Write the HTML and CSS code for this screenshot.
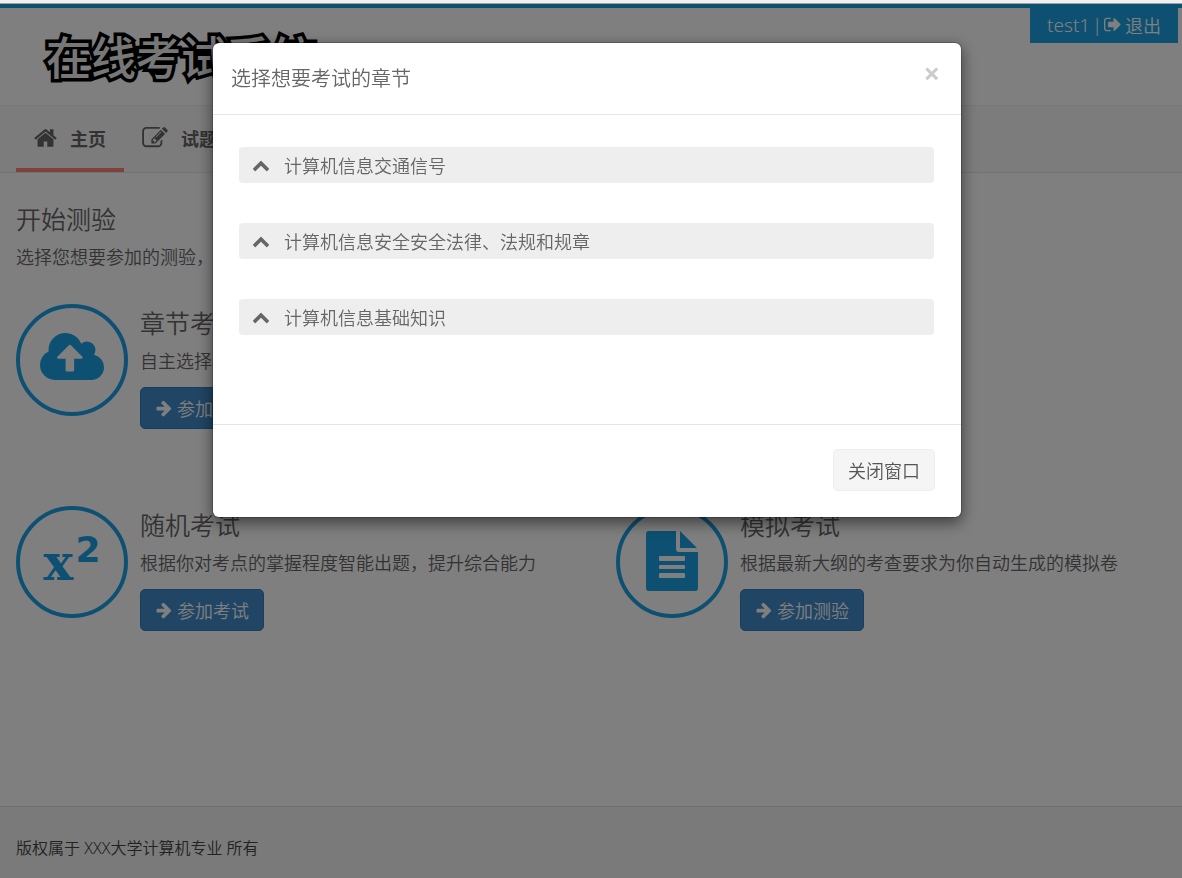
FILE: index.html
```
<!DOCTYPE html>
<html lang="zh-CN">
<head>
  <meta charset="UTF-8" />
  <meta name="viewport" content="width=device-width, initial-scale=1" />
  <title>在线考试系统</title>
  <link rel="stylesheet" href="styles.css">
</head>
<body>
  <div class="window-edge"></div>

  <!-- shared icons -->
  <svg class="sprite" aria-hidden="true">
    <symbol id="arrow-right" viewBox="0 0 1664 1792">
      <path d="M1600 960q0 54-37 91l-651 651q-39 37-91 37-51 0-90-37l-75-75q-38-38-38-91t38-91l293-293h-704q-52 0-84.5-37.5t-32.5-90.5v-128q0-53 32.5-90.5t84.5-37.5h704l-293-294q-38-36-38-90t38-90l75-75q38-38 90-38 53 0 91 38l651 651q37 35 37 90z"/>
    </symbol>
    <symbol id="chevron-up" viewBox="0 0 1792 1792">
      <path d="M1683 1331l-166 165q-19 19-45 19t-45-19l-531-531-531 531q-19 19-45 19t-45-19l-166-165q-19-19-19-45.5t19-45.5l742-741q19-19 45-19t45 19l742 741q19 19 19 45.5t-19 45.5z"/>
    </symbol>
  </svg>

  <header class="header">
    <h1 class="logo">在线考试系统</h1>
    <div class="user-bar">
      <a href="#" class="user-name">test1</a>
      <span>|</span>
      <a href="#" class="logout">
        <svg class="icon-logout" viewBox="64 192 1600 1408"><path d="M704 1440q0 4 1 20t.5 26.5-3 23.5-10 19.5-20.5 6.5h-320q-119 0-203.5-84.5t-84.5-203.5v-704q0-119 84.5-203.5t203.5-84.5h320q13 0 22.5 9.5t9.5 22.5q0 4 1 20t.5 26.5-3 23.5-10 19.5-20.5 6.5h-320q-66 0-113 47t-47 113v704q0 66 47 113t113 47h312l11.5 1 11.5 3 8 5.5 7 9 2 13.5zm928-544q0 26-19 45l-544 544q-19 19-45 19t-45-19-19-45v-288h-448q-26 0-45-19t-19-45v-384q0-26 19-45t45-19h448v-288q0-26 19-45t45-19 45 19l544 544q19 19 19 45z"/></svg>
        退出
      </a>
    </div>
  </header>

  <nav class="nav">
    <a href="#" class="nav-item active">
      <svg class="icon-nav" viewBox="64 128 1664 1536"><path d="M1472 992v480q0 26-19 45t-45 19h-384v-384h-256v384h-384q-26 0-45-19t-19-45v-480q0-1 .5-3t.5-3l575-474 575 474q1 2 1 6zm223-69l-62 74q-8 9-21 11h-3q-13 0-21-7l-692-577-692 577q-12 8-24 7-13-2-21-11l-62-74q-8-10-7-23.5t11-21.5l719-599q32-26 76-26t76 26l244 204v-195q0-14 9-23t23-9h192q14 0 23 9t9 23v408l219 182q10 8 11 21.5t-7 23.5z"/></svg>
      主页
    </a>
    <a href="#" class="nav-item">
      <svg class="icon-nav icon-edit" viewBox="0 128 1792 1536"><path d="M888 1184l116-116-152-152-116 116v56h96v96h56zm440-720q-16-16-33 1l-350 350q-17 17-1 33t33-1l350-350q17-17 1-33zm80 594v190q0 119-84.5 203.5t-203.5 84.5h-832q-119 0-203.5-84.5t-84.5-203.5v-832q0-119 84.5-203.5t203.5-84.5h832q63 0 117 25 15 7 18 23 3 17-9 29l-49 49q-14 14-32 8-23-6-45-6h-832q-66 0-113 47t-47 113v832q0 66 47 113t113 47h832q66 0 113-47t47-113v-126q0-13 9-22l64-64q15-15 35-7t20 29zm-96-738l288 288-672 672h-288v-288zm444 132l-92 92-288-288 92-92q28-28 68-28t68 28l152 152q28 28 28 68t-28 68z"/></svg>
      试题
    </a>
  </nav>

  <main class="content">
    <h2 class="title">开始测验</h2>
    <p class="desc">选择您想要参加的测验，考</p>

    <div class="exam-list">
      <section class="exam exam-first">
        <div class="circle">
          <svg class="icon-cloud" viewBox="0 128 1920 1408"><path d="M1280 864q0-14-9-23l-352-352q-9-9-23-9t-23 9l-351 351q-10 12-10 24 0 14 9 23t23 9h224v352q0 13 9.5 22.5t22.5 9.5h192q13 0 22.5-9.5t9.5-22.5v-352h224q13 0 22.5-9.5t9.5-22.5zm640 288q0 159-112.5 271.5t-271.5 112.5h-1088q-185 0-316.5-131.5t-131.5-316.5q0-130 70-240t188-165q-2-30-2-43 0-212 150-362t362-150q156 0 285.5 87t188.5 231q71-62 166-62 106 0 181 75t75 181q0 76-41 138 130 31 213.5 135.5t83.5 238.5z"/></svg>
        </div>
        <div class="exam-body">
          <h3>章节考试</h3>
          <p>自主选择具</p>
          <button class="btn-primary"><svg class="icon-arrow"><use href="#arrow-right"/></svg>参加考试</button>
        </div>
      </section>

      <section class="exam">
        <div class="circle">
          <span class="power">x<sup>2</sup></span>
        </div>
        <div class="exam-body">
          <h3>随机考试</h3>
          <p>根据你对考点的掌握程度智能出题，提升综合能力</p>
          <button class="btn-primary"><svg class="icon-arrow"><use href="#arrow-right"/></svg>参加考试</button>
        </div>
      </section>

      <section class="exam">
        <div class="circle">
          <svg class="icon-file" viewBox="0 0 52 60">
            <path fill-rule="evenodd" d="M3 0H30V18Q30 21 33 21H52V57Q52 60 49 60H3Q0 60 0 57V3Q0 0 3 0ZM14 25Q13 25 13 26V29Q13 30 14 30H38Q39 30 39 29V26Q39 25 38 25ZM14 34Q13 34 13 35V37Q13 38 14 38H38Q39 38 39 37V35Q39 34 38 34ZM14 42Q13 42 13 43V46Q13 47 14 47H38Q39 47 39 46V43Q39 42 38 42Z"/>
            <path d="M34 0L51 17H34Z"/>
          </svg>
        </div>
        <div class="exam-body">
          <h3>模拟考试</h3>
          <p>根据最新大纲的考查要求为你自动生成的模拟卷</p>
          <button class="btn-primary"><svg class="icon-arrow"><use href="#arrow-right"/></svg>参加测验</button>
        </div>
      </section>
    </div>
  </main>

  <footer class="footer">版权属于 XXX大学计算机专业 所有</footer>

  <!-- chapter picker -->
  <div class="backdrop" id="chapterModal">
    <div class="modal" role="dialog" aria-modal="true" aria-labelledby="modalTitle">
      <div class="modal-header">
        <h4 id="modalTitle">选择想要考试的章节</h4>
        <button class="close" aria-label="关闭" onclick="closeModal()">×</button>
      </div>
      <div class="modal-body">
        <button class="chapter"><svg class="icon-chevron"><use href="#chevron-up"/></svg>计算机信息交通信号</button>
        <button class="chapter"><svg class="icon-chevron"><use href="#chevron-up"/></svg>计算机信息安全安全法律、法规和规章</button>
        <button class="chapter"><svg class="icon-chevron"><use href="#chevron-up"/></svg>计算机信息基础知识</button>
      </div>
      <div class="modal-footer">
        <button class="btn-default" onclick="closeModal()">关闭窗口</button>
      </div>
    </div>
  </div>

  <script>
    function closeModal() {
      document.getElementById("chapterModal").style.display = "none";
    }
  </script>
</body>
</html>
```
FILE: styles.css
```
* {
  box-sizing: border-box;
}
body {
  margin: 0;
  min-height: 100vh;
  display: flex;
  flex-direction: column;
  font-family: "Noto Sans", "Noto Sans CJK SC", sans-serif;
  font-size: 18px;
  font-weight: 350;
  color: #666;
  background: #fff;
}
h1, h2, h3, h4, p {
  margin: 0;
  font-weight: 350;
}
a {
  color: inherit;
  text-decoration: none;
}
button {
  font: inherit;
  cursor: pointer;
}
svg {
  fill: currentColor;
  flex: none;
}
.sprite {
  display: none;
}
.window-edge {
  height: 4px;
  background: #f0f0f0;
  border-bottom: 1px solid #a0a0a0;
  position: relative;
  z-index: 20;
}

/* header */
.header {
  display: flex;
  justify-content: space-between;
  align-items: flex-start;
  height: 102px;
  padding: 0 4px 0 46px;
  border-top: 4px solid #1ba1e2;
  border-bottom: 1px solid #eee;
}
.logo {
  font-size: 45px;
  font-weight: 500;
  line-height: 100px;
  color: #eee;
  -webkit-text-stroke: 7px #000;
  stroke-linejoin: round;
  paint-order: stroke fill;
}
.user-bar {
  display: flex;
  align-items: center;
  gap: 2px;
  height: 35px;
  padding: 0 17px 2px;
  color: #fff;
  background: #1ba1e2;
}
.user-name {
  font-size: 19px;
}
.logout {
  display: flex;
  align-items: center;
  gap: 4px;
}
.icon-logout {
  width: 17px;
  height: 15px;
}

/* nav */
.nav {
  display: flex;
  height: 67px;
  padding: 0 16px;
  background: #f9f9f9;
  border-bottom: 1px solid #e7e7e7;
}
.nav-item {
  display: flex;
  align-items: center;
  gap: 13px;
  padding: 2px 18px 0;
  font-weight: bold;
  border-bottom: 4px solid transparent;
}
.nav-item.active {
  border-bottom-color: #ff8378;
}
.icon-nav {
  width: 23px;
  height: 22px;
}
.icon-edit {
  width: 26px;
}

/* content */
.content {
  flex: 1;
  padding: 27px 16px 0;
}
.title {
  font-size: 25px;
  line-height: 38px;
}
.desc {
  line-height: 38px;
}
.exam-list {
  display: grid;
  grid-template-columns: 1fr 1fr;
  gap: 77px 50px;
  margin-top: 28px;
}
.exam {
  display: flex;
  gap: 12px;
}
.exam-first {
  grid-column: 1 / -1;
}
.circle {
  display: flex;
  align-items: center;
  justify-content: center;
  flex: none;
  width: 112px;
  height: 112px;
  border: 4px solid #1ba1e2;
  border-radius: 50%;
  color: #1ba1e2;
}
.icon-cloud {
  width: 64px;
  height: 47px;
  margin-bottom: 8px;
}
.icon-file {
  width: 52px;
  height: 60px;
  margin-bottom: 2px;
}
.power {
  font-family: "DejaVu Serif", serif;
  font-size: 50px;
  font-weight: bold;
  line-height: 60px;
}
.power sup {
  margin-left: 2px;
  font-family: "DejaVu Sans", sans-serif;
  font-size: 36px;
  line-height: 1;
}
.exam h3 {
  font-size: 25px;
  line-height: 38px;
}
.exam p {
  line-height: 38px;
}
.btn-primary {
  display: flex;
  align-items: center;
  gap: 5px;
  height: 42px;
  margin-top: 7px;
  padding: 0 14px;
  color: #fff;
  background: #428bca;
  border: 1px solid #357ebd;
  border-radius: 5px;
}
.icon-arrow {
  width: 17px;
  height: 18px;
}

/* footer */
.footer {
  height: 72px;
  padding: 0 16px;
  font-size: 16px;
  line-height: 82px;
  color: #444;
  background: #f5f5f5;
  border-top: 1px solid #ddd;
}

/* modal */
.backdrop {
  position: fixed;
  inset: 0;
  z-index: 10;
  padding: 42px 8px 0 0;
  background: rgba(0, 0, 0, 0.5);
}
.modal {
  max-width: 750px;
  margin: 0 auto;
  background: #fff;
  background-clip: padding-box;
  border: 1px solid rgba(0, 0, 0, 0.2);
  border-radius: 7px;
  box-shadow: 0 5px 15px rgba(0, 0, 0, 0.5);
}
.modal-header {
  display: flex;
  justify-content: space-between;
  align-items: flex-start;
  padding: 17px 21px 16px 18px;
  border-bottom: 1px solid #e5e5e5;
}
.modal-header h4 {
  font-size: 20px;
  line-height: 38px;
}
.close {
  padding: 0;
  font-size: 29px;
  font-weight: bold;
  line-height: 26px;
  color: #ccc;
  background: none;
  border: 0;
}
.modal-body {
  display: flex;
  flex-direction: column;
  gap: 40px;
  padding: 32px 27px 89px 26px;
}
.chapter {
  display: flex;
  align-items: center;
  gap: 14px;
  height: 36px;
  padding: 0 13px;
  color: #666;
  text-align: left;
  background: #eee;
  border: 0;
  border-radius: 4px;
}
.icon-chevron {
  width: 18px;
  height: 18px;
}
.modal-footer {
  display: flex;
  justify-content: flex-end;
  padding: 24px 26px 26px;
  border-top: 1px solid #e5e5e5;
}
.btn-default {
  height: 42px;
  padding: 0 14px;
  color: #555;
  background: #f5f5f5;
  border: 1px solid #eee;
  border-radius: 5px;
}
```
